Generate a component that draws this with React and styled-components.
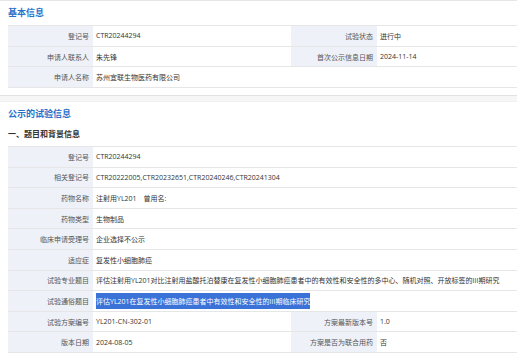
import React from 'react'
import styled, { createGlobalStyle } from 'styled-components'

const GlobalStyle = createGlobalStyle`
    body {
        margin: 0;
        background: #ffffff;
        font-family: "Open Sans", "Noto Sans CJK SC", sans-serif;
        color: #333333;
    }
`

const basicRows = [
    { label: '登记号', value: 'CTR20244294', label2: '试验状态', value2: '进行中' },
    { label: '申请人联系人', value: '朱先锋', label2: '首次公示信息日期', value2: '2024-11-14' },
    { label: '申请人名称', value: '苏州宜联生物医药有限公司' },
]

const trialRows = [
    { label: '登记号', value: 'CTR20244294' },
    { label: '相关登记号', value: 'CTR20222005,CTR20232651,CTR20240246,CTR20241304' },
    { label: '药物名称', value: '注射用YL201\u3000曾用名:' },
    { label: '药物类型', value: '生物制品' },
    { label: '临床申请受理号', value: '企业选择不公示' },
    { label: '适应症', value: '复发性小细胞肺癌' },
    { label: '试验专业题目', value: '评估注射用YL201对比注射用盐酸托泊替康在复发性小细胞肺癌患者中的有效性和安全性的多中心、随机对照、开放标签的III期研究' },
    { label: '试验通俗题目', value: '评估YL201在复发性小细胞肺癌患者中有效性和安全性的III期临床研究', selected: true },
    { label: '试验方案编号', value: 'YL201-CN-302-01', label2: '方案最新版本号', value2: '1.0' },
    { label: '版本日期', value: '2024-08-05', label2: '方案是否为联合用药', value2: '否' },
]

function InfoTable({ rows, rowHeight }) {
    return <Table>
        {rows.map((row, i) => (
            <Row key={i} $h={rowHeight}>
                <Label>{row.label}</Label>
                {row.label2 ? <>
                    <Value>{row.value}</Value>
                    <Label>{row.label2}</Label>
                    <Value>{row.value2}</Value>
                </> : <Value $wide>
                    {row.selected ? <Selected>{row.value}</Selected> : row.value}
                </Value>}
            </Row>
        ))}
    </Table>
}

function App() {
    return <>
        <GlobalStyle />
        <Card $top>
            <Title>基本信息</Title>
            <InfoTable rows={basicRows} rowHeight={20.7} />
            <Spacer />
        </Card>
        <Gap />
        <Card>
            <Title>公示的试验信息</Title>
            <SubTitle>一、题目和背景信息</SubTitle>
            <InfoTable rows={trialRows} rowHeight={20.6} />
        </Card>
    </>
}

export default App

const Card = styled.div`
    background: #ffffff;
    border-top: 1px solid ${p => p.$top ? '#e6e6e6' : '#f0f0f0'};
    border-bottom: ${p => p.$top ? '1px solid #e2e2e2' : 'none'};
    padding-left: 8px;
`
const Gap = styled.div`
    height: 5px;
    background: #f6f6f7;
`
const Spacer = styled.div`
    height: 7px;
`
const Title = styled.div`
    height: 24px;
    line-height: 24px;
    font-size: 9px;
    font-weight: 700;
    color: #2771c8;
`
const SubTitle = styled.div`
    height: 16px;
    line-height: 16px;
    margin-bottom: 4px;
    font-size: 8px;
    font-weight: 700;
    color: #333333;
`
const Table = styled.div`
    display: flex;
    flex-direction: column;
    border-top: 1px solid #e6e6e6;
`
const Row = styled.div`
    display: grid;
    grid-template-columns: 85px 198px 86px 1fr;
    height: ${p => p.$h}px;
    box-sizing: border-box;
    border-bottom: 1px solid #e6e6e6;
    font-size: 7px;
`
const Label = styled.div`
    display: flex;
    align-items: center;
    justify-content: flex-end;
    padding-right: 4px;
    background: #eef1f8;
    color: #555555;
    white-space: nowrap;
`
const Value = styled.div`
    display: flex;
    align-items: center;
    padding-left: 3px;
    white-space: nowrap;
    overflow: hidden;
    color: #333333;
    grid-column: ${p => p.$wide ? '2 / 5' : 'auto'};
`
const Selected = styled.span`
    background: #3a72d8;
    color: #ffffff;
    padding: 3px 0;
`
